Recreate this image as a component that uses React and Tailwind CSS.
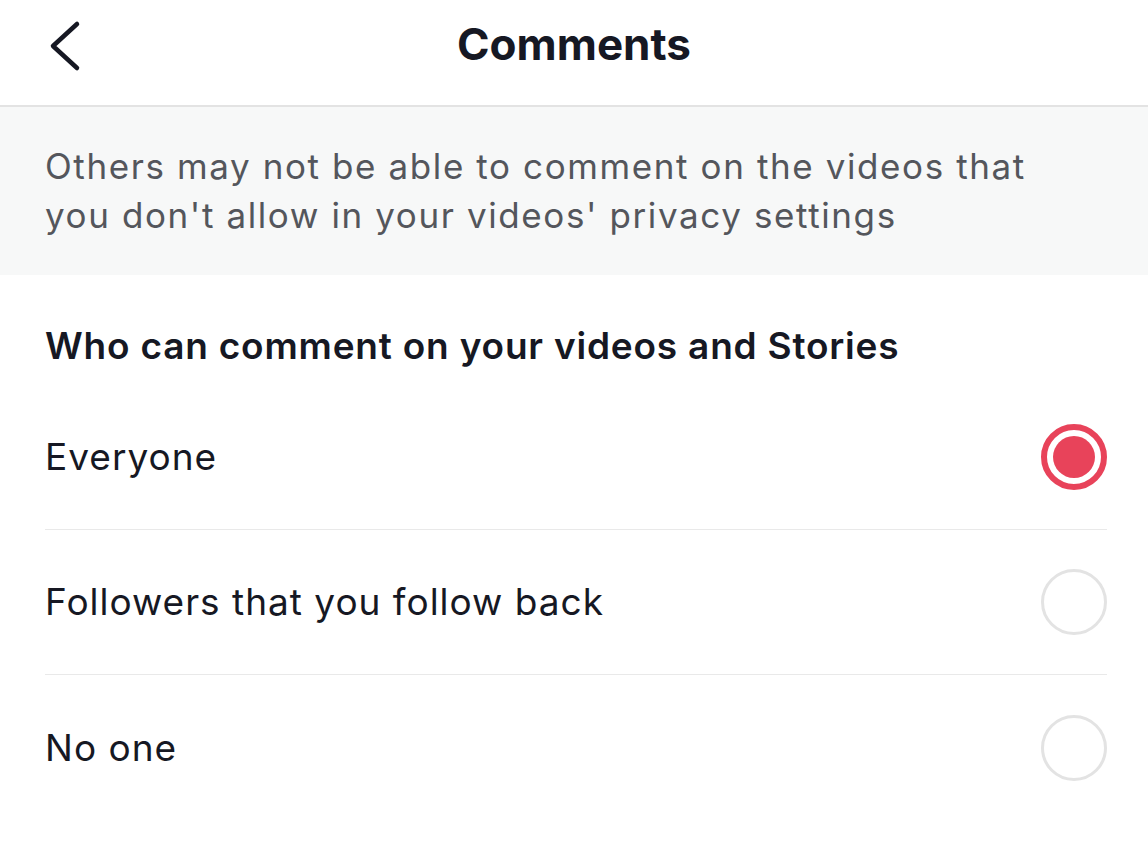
import React from "react";

const font = { fontFamily: "Inter, 'Noto Sans', sans-serif" };

function Radio({ checked }) {
  if (checked) {
    return (
      <div className="w-[66px] h-[66px] rounded-full border-[6px] border-[#e8435a] flex items-center justify-center shrink-0">
        <div className="w-[42px] h-[42px] rounded-full bg-[#e8435a]" />
      </div>
    );
  }
  return <div className="w-[66px] h-[66px] rounded-full border-[3px] border-[#e3e3e3] shrink-0" />;
}

function Row({ label, checked, last }) {
  return (
    <div className={"flex items-center justify-between h-[145px] " + (last ? "" : "border-b border-[#e9e9e9]")}>
      <span className="text-[37px] tracking-[1px] text-[#161823]">{label}</span>
      <Radio checked={checked} />
    </div>
  );
}

export default function App() {
  return (
    <div className="w-[1148px] h-[845px] bg-white overflow-hidden" style={font}>
      <div className="relative h-[107px] flex items-center justify-center border-b-2 border-[#e3e3e3]">
        <div className="absolute left-[46px] top-[20px]">
          <svg width="38" height="54" viewBox="0 0 38 54" fill="none">
            <path d="M31 4 L7 26 L31 48" stroke="#161823" strokeWidth="4.5" strokeLinecap="round" strokeLinejoin="round" />
          </svg>
        </div>
        <h1 className="text-[44px] font-bold text-[#161823] mt-[-18px]">Comments</h1>
      </div>
      <div className="bg-[#f7f8f8] h-[168px] pl-[45px] pr-[20px] pt-[35px]">
        <p className="text-[35px] leading-[49px] tracking-[1.6px] text-[#54565c] whitespace-nowrap">
          Others may not be able to comment on the videos that
          <br />
          you don't allow in your videos' privacy settings
        </p>
      </div>
      <div className="pl-[45px] pr-[41px]">
        <div className="pt-[47px] h-[120px]">
          <h2 className="text-[37px] font-semibold tracking-[0.8px] text-[#161823] leading-[48px] whitespace-nowrap">Who can comment on your videos and Stories</h2>
        </div>
        <div className="mt-[-10px]">
          <Row label="Everyone" checked />
          <Row label="Followers that you follow back" />
          <Row label="No one" last />
        </div>
      </div>
    </div>
  );
}
